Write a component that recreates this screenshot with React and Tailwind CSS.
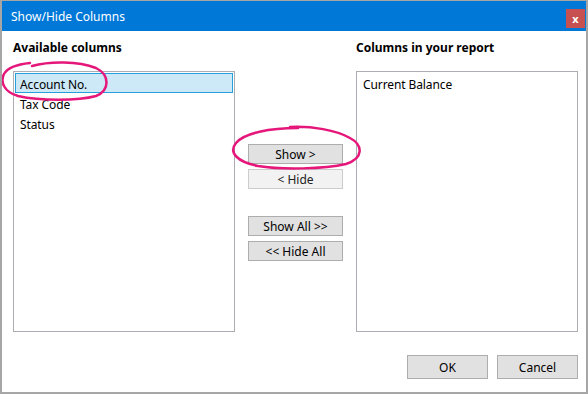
import React from "react";

const FONT = { fontFamily: '"Noto Sans", "Open Sans", Arial, sans-serif' };

function DlgButton({ children, muted, className = "" }) {
  return (
    <button
      type="button"
      className={`flex items-center justify-center text-[12px] leading-none border pt-[1px] ${
        muted
          ? "bg-[#f2f2f2] border-[#cccccc] text-[#222]"
          : "bg-[#e1e1e1] border-[#adadad] text-black"
      } ${className}`}
    >
      {children}
    </button>
  );
}

function ListBox({ items, selected }) {
  return (
    <div className="h-[261px] w-[222px] border border-[#abadb3] bg-white p-[1px]">
      {items.map((it) => (
        <div
          key={it}
          className={`h-[20px] flex items-center pl-[4px] pt-[3px] text-[12px] tracking-[-0.1px] border ${
            it === selected
              ? "bg-[#cde8f7] border-[#26a0da]"
              : "border-transparent"
          }`}
        >
          {it}
        </div>
      ))}
    </div>
  );
}

export default function App() {
  return (
    <div
      className="relative w-[588px] h-[394px] bg-white border-t border-l-2 border-r-2 border-b-2 border-[#a6a6a6] flex flex-col text-black overflow-hidden"
      style={FONT}
    >
      {/* title bar */}
      <div className="h-[30px] bg-[#0078d7] flex items-start justify-between shrink-0">
        <div className="pl-[9px] pt-[7px] text-[12px] text-white">Show/Hide Columns</div>
        <div className="mt-[8px] mr-[1px] w-[19px] h-[19px] bg-[#c75050] text-white text-[11px] font-bold flex items-center justify-center leading-none">
          x
        </div>
      </div>

      {/* body */}
      <div className="flex pl-[11px] pt-[9px]">
        <div className="w-[222px]">
          <div className="h-[16px] text-[12px] font-bold leading-[16px]">Available columns</div>
          <div className="mt-[15px]">
            <ListBox items={["Account No.", "Tax Code", "Status"]} selected="Account No." />
          </div>
        </div>

        <div className="ml-[13px] w-[95px] pt-[104px] flex flex-col">
          <DlgButton className="h-[20px]">Show &gt;</DlgButton>
          <DlgButton muted className="h-[20px] mt-[5px]">&lt; Hide</DlgButton>
          <DlgButton className="h-[20px] mt-[27px]">Show All &gt;&gt;</DlgButton>
          <DlgButton className="h-[20px] mt-[5px]">&lt;&lt; Hide All</DlgButton>
        </div>

        <div className="ml-[13px] w-[222px]">
          <div className="h-[16px] text-[12px] font-bold leading-[16px]">Columns in your report</div>
          <div className="mt-[15px]">
            <ListBox items={["Current Balance"]} />
          </div>
        </div>
      </div>

      {/* footer */}
      <div className="flex justify-end gap-[9px] pr-[8px] mt-[23px]">
        <DlgButton className="w-[81px] h-[24px]">OK</DlgButton>
        <DlgButton className="w-[81px] h-[24px]">Cancel</DlgButton>
      </div>

      {/* pink annotation marks */}
      <svg
        className="absolute left-[-2px] top-[-1px] pointer-events-none"
        width="588"
        height="394"
        viewBox="0 0 588 394"
        fill="none"
      >
        <path
          d="M32 66 C50 61 78 61 96 68 C110 75 110 90 96 96 C78 101 40 101 18 96 C4 92 0 82 4 74 C8 67 20 64 30 63"
          stroke="#e5177b"
          strokeWidth="2.5"
          strokeLinecap="round"
        />
        <path
          d="M298 128 C270 128 244 133 236 143 C228 153 238 162 258 166 C282 170 324 169 346 164 C364 158 363 145 350 138 C336 130 312 126 290 127"
          stroke="#e5177b"
          strokeWidth="2.5"
          strokeLinecap="round"
        />
      </svg>
    </div>
  );
}
